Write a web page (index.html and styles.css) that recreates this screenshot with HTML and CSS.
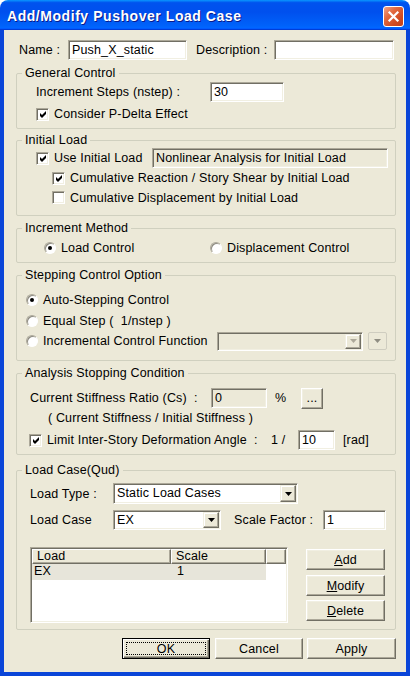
FILE: index.html
```html
<!DOCTYPE html>
<html>
<head>
<meta charset="utf-8">
<title>Add/Modify Pushover Load Case</title>
<link rel="stylesheet" href="styles.css">
</head>
<body>
<div class="window">
  <div class="titlebar">
    <span class="title">Add/Modify Pushover Load Case</span>
    <span class="close"><svg width="19" height="19" viewBox="0 0 19 19"><path d="M5.5 5.5 L13.5 13.5 M13.5 5.5 L5.5 13.5" stroke="#fff" stroke-width="2.2" stroke-linecap="square"/></svg></span>
  </div>
  <div class="frame">
    <div class="client">
      <div class="row name-row">
        <span class="lbl w-name">Name :</span>
        <span class="edit w-name-edit">Push_X_static</span>
        <span class="lbl w-desc">Description :</span>
        <span class="edit w-desc-edit"></span>
      </div>

      <div class="group g-general">
        <span class="legend">General Control</span>
        <div class="row">
          <span class="lbl w-steps">Increment Steps (nstep) :</span>
          <span class="edit w-steps-edit">30</span>
        </div>
        <div class="row r-gap2">
          <span class="chk"><svg width="9" height="9" viewBox="0 0 9 9"><polygon points="1,3 3,5 7,1 7,4 3,8 1,6" fill="#000"/></svg></span>
          <span class="lbl">Consider P-Delta Effect</span>
        </div>
      </div>

      <div class="group g-initial">
        <span class="legend">Initial Load</span>
        <div class="row">
          <span class="chk"><svg width="9" height="9" viewBox="0 0 9 9"><polygon points="1,3 3,5 7,1 7,4 3,8 1,6" fill="#000"/></svg></span>
          <span class="lbl w-useinit">Use Initial Load</span>
          <span class="edit ro w-init-edit">Nonlinear Analysis for Initial Load</span>
        </div>
        <div class="row indent">
          <span class="chk"><svg width="9" height="9" viewBox="0 0 9 9"><polygon points="1,3 3,5 7,1 7,4 3,8 1,6" fill="#000"/></svg></span>
          <span class="lbl">Cumulative Reaction / Story Shear by Initial Load</span>
        </div>
        <div class="row indent r-h19">
          <span class="chk"></span>
          <span class="lbl">Cumulative Displacement by Initial Load</span>
        </div>
      </div>

      <div class="group g-incr">
        <span class="legend">Increment Method</span>
        <div class="row">
          <span class="opt w-loadctl"><span class="radio on"><span class="dot"></span></span><span class="lbl">Load Control</span></span>
          <span class="opt"><span class="radio"></span><span class="lbl">Displacement Control</span></span>
        </div>
      </div>

      <div class="group g-step">
        <span class="legend">Stepping Control Option</span>
        <div class="row">
          <span class="radio on"><span class="dot"></span></span><span class="lbl">Auto-Stepping Control</span>
        </div>
        <div class="row r-gap1">
          <span class="radio"></span><span class="lbl">Equal Step (&nbsp;&nbsp;1/nstep )</span>
        </div>
        <div class="row">
          <span class="opt w-incfn"><span class="radio"></span><span class="lbl">Incremental Control Function</span></span>
          <span class="combo disabled w-incfn-combo"><span class="val"></span><span class="dd"><svg width="7" height="4" viewBox="0 0 7 4"><polygon points="0,0 7,0 3.5,4" fill="#ACA899"/></svg></span></span>
          <span class="smallbtn"><svg width="7" height="4" viewBox="0 0 7 4"><polygon points="0,0 7,0 3.5,4" fill="#8F8D82"/></svg></span>
        </div>
      </div>

      <div class="group g-stop">
        <span class="legend">Analysis Stopping Condition</span>
        <div class="row">
          <span class="lbl w-cs">Current Stiffness Ratio (Cs)&nbsp;&nbsp;:</span>
          <span class="edit ro w-cs-edit">0</span>
          <span class="lbl w-pct">%</span>
          <span class="btn w-dots">...</span>
        </div>
        <div class="row indent2">
          <span class="lbl">( Current Stiffness / Initial Stiffness )</span>
        </div>
        <div class="row r-gap2">
          <span class="chk chk-shift"><svg width="9" height="9" viewBox="0 0 9 9"><polygon points="1,3 3,5 7,1 7,4 3,8 1,6" fill="#000"/></svg></span>
          <span class="lbl w-limit">Limit Inter-Story Deformation Angle</span>
          <span class="lbl w-colon">:</span>
          <span class="lbl w-one">1 /</span>
          <span class="edit w-rad-edit">10</span>
          <span class="lbl rad">[rad]</span>
        </div>
      </div>

      <div class="group g-case">
        <span class="legend">Load Case(Qud)</span>
        <div class="row r-h21">
          <span class="lbl w-lt">Load Type :</span>
          <span class="combo w-lt-combo"><span class="val">Static Load Cases</span><span class="dd"><svg width="7" height="4" viewBox="0 0 7 4"><polygon points="0,0 7,0 3.5,4" fill="#000"/></svg></span></span>
        </div>
        <div class="row r-gap6">
          <span class="lbl w-lt">Load Case</span>
          <span class="combo w-lc-combo"><span class="val">EX</span><span class="dd"><svg width="7" height="4" viewBox="0 0 7 4"><polygon points="0,0 7,0 3.5,4" fill="#000"/></svg></span></span>
          <span class="lbl w-sf">Scale Factor :</span>
          <span class="edit w-sf-edit">1</span>
        </div>
        <div class="list-row">
          <div class="list">
            <div class="lhead">
              <span class="hcell c-load">Load</span>
              <span class="hcell c-scale">Scale</span>
              <span class="hcell c-fill"></span>
            </div>
            <div class="lrow">
              <span class="cell c-load">EX</span>
              <span class="cell c-scale">1</span>
            </div>
          </div>
          <div class="side-btns">
            <span class="btn sb"><u>A</u>dd</span>
            <span class="btn sb sb-mod"><u>M</u>odify</span>
            <span class="btn sb sb-del"><u>D</u>elete</span>
          </div>
        </div>
      </div>

      <div class="footer">
        <span class="btn fb default"><span class="focus">OK</span></span>
        <span class="btn fb fb-cancel">Cancel</span>
        <span class="btn fb fb-apply">Apply</span>
      </div>
    </div>
  </div>
</div>
</body>
</html>
```

FILE: styles.css
```css
* { box-sizing: border-box; }
html, body { margin: 0; padding: 0; background: #ffffff; }
body {
  font-family: "Liberation Sans", Arial, sans-serif;
  font-size: 12.5px;
  letter-spacing: 0.15px;
  color: #000;
}

.window {
  width: 410px;
  height: 676px;
  display: flex;
  flex-direction: column;
}

.titlebar {
  height: 30px;
  flex: none;
  display: flex;
  align-items: center;
  justify-content: space-between;
  padding: 0 6px 0 7px;
  border-radius: 8px 8px 0 0;
  background: linear-gradient(to bottom, #0997ff 0%, #0053ee 9%, #0050ee 40%, #0062fa 85%, #0066ff 92%, #005bff 95%, #003dd7 97%, #003dd7 100%);
}
.title {
  color: #fff;
  font-weight: bold;
  font-size: 14px;
  letter-spacing: 0.55px;
  text-shadow: 1px 1px 0 #0a1a8a;
  margin-top: 1px;
}
.close {
  width: 21px;
  height: 21px;
  margin-top: 2px;
  border: 1px solid #fff;
  border-radius: 3px;
  background: linear-gradient(135deg, #f0a48a 0%, #e2693f 35%, #d14b22 70%, #c2401a 100%);
  display: flex;
  align-items: center;
  justify-content: center;
}

.frame {
  flex: 1;
  display: flex;
  border: 4px solid #0a45d8;
  border-top: 0;
  box-shadow: inset 1px 0 0 #0842c8, inset -1px 0 0 #0842c8;
}
.client {
  flex: 1;
  background: #ece9d8;
  padding: 10px 10px 0 12px;
  display: flex;
  flex-direction: column;
}

.row {
  display: flex;
  align-items: center;
  height: 20px;
  white-space: nowrap;
  flex: none;
}
.r-gap1 { margin-top: 1px; }
.r-gap2 { margin-top: 2px; }
.r-gap6 { margin-top: 6px; }
.r-h19 { height: 19px; }
.r-h21 { height: 21px; }
.lbl { white-space: nowrap; flex: none; }

/* sunken edit */
.edit {
  height: 20px;
  flex: none;
  background: #fff;
  border: 1px solid;
  border-color: #aca899 #fff #fff #aca899;
  box-shadow: inset 1px 1px 0 #716f64, inset -1px -1px 0 #f1efe2;
  padding: 0 0 0 3px;
  line-height: 18px;
  white-space: nowrap;
  overflow: hidden;
}
.edit.ro { background: #ece9d8; }

.name-row { margin-left: 3px; }
.w-name { width: 49px; }
.w-name-edit { width: 119px; }
.w-desc { width: 87px; padding-left: 9px; }
.w-desc-edit { width: 120px; }

/* group box */
.group {
  position: relative;
  flex: none;
  border: 1px solid #d0d0bf;
  border-radius: 2px;
}
.legend {
  position: absolute;
  top: -9px;
  left: 5px;
  padding: 0 3px;
  line-height: 16px;
  background: #ece9d8;
  white-space: nowrap;
}

.g-general { margin-top: 13px; height: 56px; padding: 8px 0 0 19px; }
.w-steps { width: 174px; }
.w-steps-edit { width: 74px; }

.g-initial { margin-top: 11px; height: 76px; padding: 7px 0 0 19px; }
.w-useinit { width: 98px; }
.w-init-edit { width: 236px; }
.indent { padding-left: 16px; }

.g-incr { margin-top: 12px; height: 35px; padding: 9px 0 0 27px; }
.opt { display: flex; align-items: center; flex: none; }
.w-loadctl { width: 166px; }

.g-step { margin-top: 12px; height: 86px; padding: 14px 0 0 9px; }
.w-incfn { width: 191px; }
.w-incfn-combo { width: 146px; height: 19px; }
.smallbtn {
  width: 19px;
  height: 18px;
  margin-left: 5px;
  flex: none;
  border: 1px solid #cfcdc0;
  border-radius: 2px;
  background: #ece9d8;
  display: flex;
  align-items: center;
  justify-content: center;
}

.g-stop { margin-top: 12px; height: 82px; padding: 14px 0 0 13px; }
.w-cs { width: 181px; }
.w-cs-edit { width: 56px; }
.w-pct { width: 34px; padding-left: 8px; }
.w-dots { width: 22px; height: 21px; line-height: 14px; }
.indent2 { padding-left: 18px; }
.chk-shift { margin-left: -1px; }
.w-limit { width: 207px; }
.w-colon { width: 17px; }
.w-one { width: 27px; }
.w-rad-edit { width: 37px; }
.rad { margin-left: 8px; }

.g-case { margin-top: 15px; height: 160px; padding: 12px 0 0 13px; }
.w-lt { width: 83px; }
.w-lt-combo { width: 185px; height: 21px; }
.w-lc-combo { width: 108px; height: 20px; }
.w-sf { width: 102px; padding-left: 13px; }
.w-sf-edit { width: 63px; }

/* checkbox */
.chk {
  width: 13px;
  height: 13px;
  flex: none;
  margin-right: 5px;
  background: #fff;
  border: 1px solid;
  border-color: #aca899 #fff #fff #aca899;
  box-shadow: inset 1px 1px 0 #716f64, inset -1px -1px 0 #f1efe2;
  display: flex;
  align-items: center;
  justify-content: center;
}
.chk svg { display: block; margin: 1px 0 0 1px; }

/* radio */
.radio {
  width: 12px;
  height: 12px;
  flex: none;
  margin-right: 5px;
  border-radius: 50%;
  background: #fff;
  border: 1px solid;
  border-color: #aca899 #fff #fff #aca899;
  box-shadow: inset 1px 1px 0 #8d8b80;
  display: flex;
  align-items: center;
  justify-content: center;
}
.dot {
  width: 4px;
  height: 4px;
  border-radius: 50%;
  background: #000;
}

/* combo */
.combo {
  flex: none;
  display: flex;
  background: #fff;
  border: 1px solid;
  border-color: #aca899 #fff #fff #aca899;
  box-shadow: inset 1px 1px 0 #716f64, inset -1px -1px 0 #f1efe2;
  padding: 1px;
}
.combo .val {
  flex: 1;
  padding-left: 2px;
  line-height: 16px;
  white-space: nowrap;
}
.combo .dd {
  width: 16px;
  flex: none;
  background: #ece9d8;
  border: 1px solid;
  border-color: #f1efe2 #716f64 #716f64 #f1efe2;
  box-shadow: inset -1px -1px 0 #aca899, inset 1px 1px 0 #fff;
  display: flex;
  align-items: center;
  justify-content: center;
}
.combo.disabled { background: #ece9d8; }

/* buttons */
.btn {
  flex: none;
  height: 21px;
  background: #ece9d8;
  border: 1px solid;
  border-color: #fff #716f64 #716f64 #fff;
  box-shadow: inset -1px -1px 0 #aca899, inset 1px 1px 0 #f1efe2;
  display: flex;
  align-items: center;
  justify-content: center;
  white-space: nowrap;
}
.btn u { text-decoration: underline; }

/* list */
.list-row {
  display: flex;
  align-items: flex-start;
  margin-top: 17px;
}
.list {
  width: 258px;
  height: 76px;
  flex: none;
  background: #fff;
  border: 1px solid;
  border-color: #aca899 #fff #fff #aca899;
  box-shadow: inset 1px 1px 0 #716f64, inset -1px -1px 0 #f1efe2;
  padding: 1px;
  display: flex;
  flex-direction: column;
}
.lhead { display: flex; height: 15px; flex: none; }
.hcell {
  height: 15px;
  background: #ece9d8;
  border: 1px solid;
  border-color: #fff #716f64 #716f64 #fff;
  box-shadow: inset -1px -1px 0 #aca899;
  padding-left: 4px;
  line-height: 12px;
  flex: none;
}
.c-load { width: 139px; }
.c-scale { width: 95px; }
.c-fill { width: 20px; }
.lrow {
  display: flex;
  height: 16px;
  width: 234px;
  background: #e7e5da;
  line-height: 15px;
}
.cell { padding-left: 2px; flex: none; }
.lrow .c-scale { padding-left: 6px; }

.side-btns {
  display: flex;
  flex-direction: column;
  margin-left: 18px;
  margin-top: 2px;
}
.sb { width: 79px; }
.sb-mod { margin-top: 5px; }
.sb-del { margin-top: 4px; }

/* footer */
.footer {
  display: flex;
  justify-content: flex-end;
  margin-top: 8px;
}
.fb { width: 88px; }
.fb-cancel { margin-left: 5px; }
.fb-apply { margin-left: 4px; width: 89px; }
.default {
  border: 1px solid #000;
  box-shadow: inset 1px 1px 0 #fff, inset -1px -1px 0 #716f64, inset -2px -2px 0 #aca899;
  padding: 3px 3px 3px 3px;
  align-items: stretch;
}
.focus {
  flex: 1;
  border: 1px dotted #000;
  display: flex;
  align-items: center;
  justify-content: center;
  line-height: 12px;
}
```
